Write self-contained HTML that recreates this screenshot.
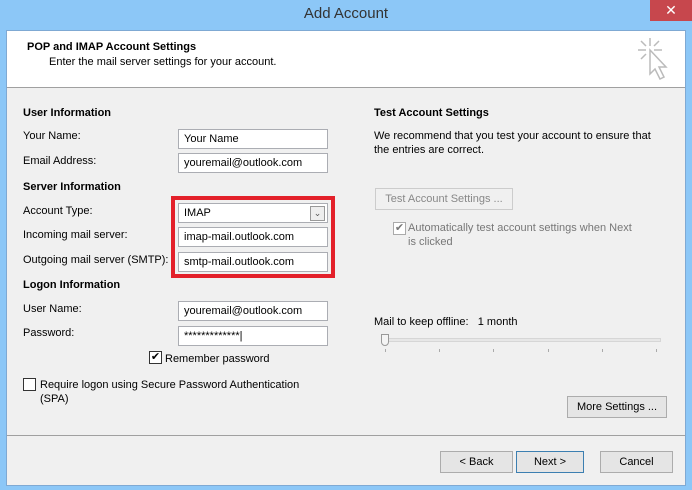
<!DOCTYPE html>
<html><head><style>
*{margin:0;padding:0;box-sizing:border-box}
body{width:692px;height:490px;background:#8cc7f7;font-family:"Liberation Sans",sans-serif;font-size:11px;color:#000;position:relative;overflow:hidden}
.a{position:absolute;white-space:nowrap}
.b{font-weight:bold}
.in{position:absolute;background:#fff;border:1px solid #abadb3;height:20px;padding:3px 5px;font-size:11px}
.btn{position:absolute;background:#e5e5e5;border:1px solid #acacac;height:22px;text-align:center;line-height:20px;font-size:11px}
.cb{position:absolute;width:13px;height:13px;border:1px solid #333;background:#fff}
.t{position:absolute;top:349px;width:1px;height:3px;background:#aaa}
</style></head><body>
<div class="a" style="left:0;top:5px;width:692px;text-align:center;font-size:15px;color:#333">Add Account</div>
<div class="a" style="left:650px;top:0;width:42px;height:21px;background:#c7474d;color:#fff;text-align:center;font-size:14px;line-height:21px">✕</div>
<div class="a" style="left:6px;top:30px;width:680px;height:456px;background:#f0f0f0;border:1px solid #7fa9d3"></div>
<div class="a" style="left:7px;top:31px;width:678px;height:57px;background:#fff;border-bottom:1px solid #a0a0a0"></div>
<div class="a b" style="left:27px;top:41px">POP and IMAP Account Settings</div>
<div class="a" style="left:49px;top:56px">Enter the mail server settings for your account.</div>
<svg class="a" style="left:634px;top:36px" width="40" height="48"><g stroke="#bbb" fill="none" stroke-width="1.5"><path d="M16 2v8M4 14h8M20 14h8M7 5l5 5M25 5l-5 5M7 23l5-5"/><path d="M16 14v24l5-5 5 10 4-2-5-10h7z" fill="#fff"/></g></svg>
<div class="a b" style="left:23px;top:107px">User Information</div>
<div class="a" style="left:23px;top:130px">Your Name:</div>
<div class="in" style="left:178px;top:129px;width:150px">Your Name</div>
<div class="a" style="left:23px;top:155px">Email Address:</div>
<div class="in" style="left:178px;top:153px;width:150px">youremail@outlook.com</div>
<div class="a b" style="left:23px;top:181px">Server Information</div>
<div class="a" style="left:23px;top:205px">Account Type:</div>
<div class="a" style="left:23px;top:229px">Incoming mail server:</div>
<div class="a" style="left:23px;top:254px">Outgoing mail server (SMTP):</div>
<div class="a" style="left:171px;top:196px;width:164px;height:82px;border:4px solid #e3202a"></div>
<div class="in" style="left:178px;top:203px;width:150px">IMAP</div>
<div class="a" style="left:310px;top:206px;width:15px;height:15px;border:1px solid #999;background:#eee;font-size:9px;text-align:center;line-height:13px;color:#555">⌄</div>
<div class="in" style="left:178px;top:227px;width:150px">imap-mail.outlook.com</div>
<div class="in" style="left:178px;top:252px;width:150px">smtp-mail.outlook.com</div>
<div class="a b" style="left:23px;top:279px">Logon Information</div>
<div class="a" style="left:23px;top:303px">User Name:</div>
<div class="in" style="left:178px;top:301px;width:150px">youremail@outlook.com</div>
<div class="a" style="left:23px;top:327px">Password:</div>
<div class="in" style="left:178px;top:326px;width:150px">*************|</div>
<div class="cb" style="left:149px;top:351px;font-size:11px;line-height:11px;text-align:center">✔</div>
<div class="a" style="left:165px;top:353px">Remember password</div>
<div class="cb" style="left:23px;top:378px"></div>
<div class="a" style="left:40px;top:379px">Require logon using Secure Password Authentication</div>
<div class="a" style="left:40px;top:393px">(SPA)</div>
<div class="a b" style="left:374px;top:107px">Test Account Settings</div>
<div class="a" style="left:374px;top:130px">We recommend that you test your account to ensure that</div>
<div class="a" style="left:374px;top:144px">the entries are correct.</div>
<div class="btn" style="left:375px;top:188px;width:138px;color:#888;background:#f0f0f0;border-color:#ccc">Test Account Settings ...</div>
<div class="cb" style="left:393px;top:222px;border-color:#aaa;color:#777;font-size:11px;line-height:11px;text-align:center">✔</div>
<div class="a" style="left:408px;top:222px;color:#777">Automatically test account settings when Next</div>
<div class="a" style="left:408px;top:236px;color:#777">is clicked</div>
<div class="a" style="left:374px;top:316px">Mail to keep offline:&nbsp;&nbsp; 1 month</div>
<div class="a" style="left:386px;top:338px;width:275px;height:4px;background:#e7e7e7;border:1px solid #d6d6d6"></div>
<div class="a" style="left:381px;top:334px;width:8px;height:12px;border:1px solid #999;background:#f4f4f4;border-radius:0 0 4px 4px"></div>
<div class="t" style="left:385px"></div><div class="t" style="left:439px"></div><div class="t" style="left:493px"></div><div class="t" style="left:548px"></div><div class="t" style="left:602px"></div><div class="t" style="left:656px"></div>
<div class="btn" style="left:567px;top:396px;width:100px">More Settings ...</div>
<div class="a" style="left:7px;top:435px;width:678px;height:1px;background:#a0a0a0"></div>
<div class="btn" style="left:440px;top:451px;width:73px">&lt; Back</div>
<div class="btn" style="left:516px;top:451px;width:68px;border-color:#3c7fb1">Next &gt;</div>
<div class="btn" style="left:600px;top:451px;width:73px">Cancel</div>
</body></html>
